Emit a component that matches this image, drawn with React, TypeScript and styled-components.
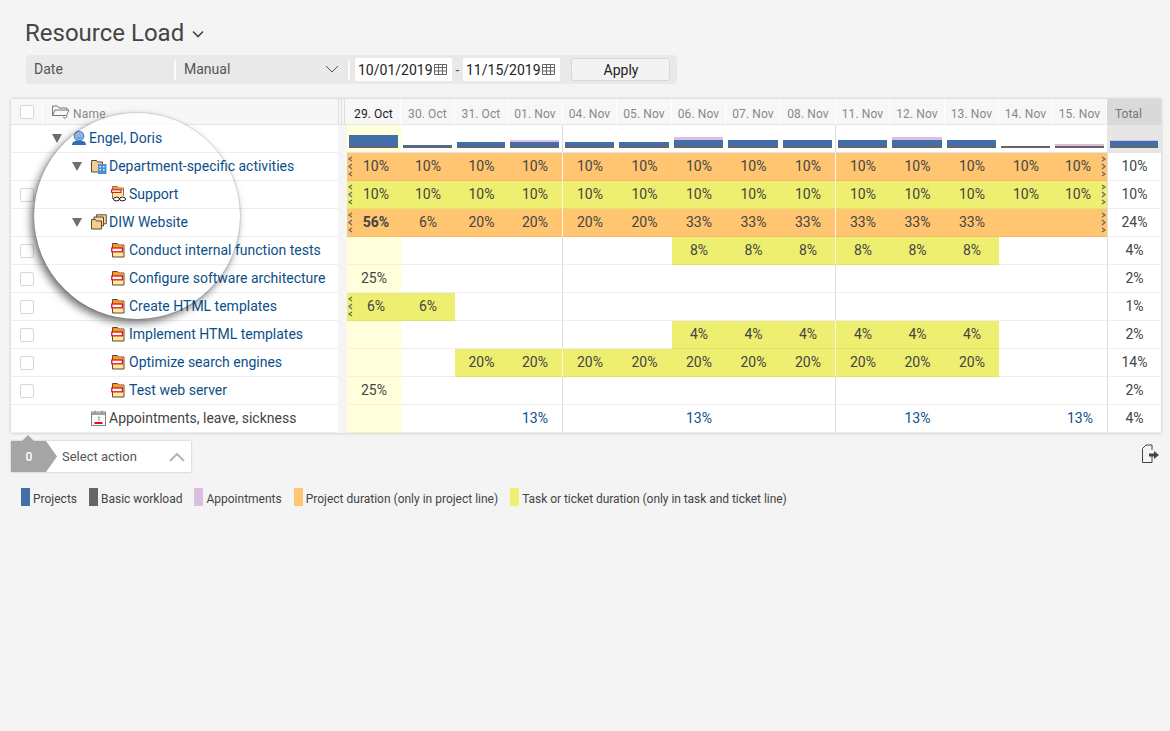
import React from "react";
import styled, { createGlobalStyle } from "styled-components";

const GlobalStyle = createGlobalStyle`
* {
  box-sizing: border-box;
  font-family: "Roboto", "Liberation Sans", sans-serif;
}
body {
  margin: 0;
  padding: 0;
  background-color: #f4f4f4;
}
`;

const Page = styled.div`
  width: 1170px;
  height: 731px;
  padding: 0 9px 0 11px;
  overflow: hidden;
`;

const TitleRow = styled.div`
  height: 55px;
  padding: 19px 0 0 14px;
  display: flex;
  align-items: flex-start;
  gap: 8px;
`;

const Title = styled.h1`
  margin: 0;
  font-size: 24px;
  line-height: 28px;
  font-weight: 400;
  color: #444;
`;

const TitleCaret = styled.svg`
  width: 12px;
  height: 8px;
  margin-top: 11px;
`;

const Toolbar = styled.div`
  margin-left: 15px;
  width: 651px;
  height: 29px;
  background: #e9e9e9;
  border-radius: 4px;
  display: flex;
  align-items: center;
  color: #555;
  font-size: 14px;
`;

const ToolField = styled.div<{ $width: number }>`
  width: ${({ $width }) => $width}px;
  height: 100%;
  padding: 0 9px 1px 8px;
  display: flex;
  align-items: center;
  justify-content: space-between;
`;

const ToolDivider = styled.div`
  width: 2px;
  height: 20px;
  background: #fbfbfb;
`;

const DateGroup = styled.div`
  margin-left: 5px;
  display: flex;
  align-items: center;
`;

const DateBox = styled.div`
  width: 97px;
  height: 23px;
  background: #fff;
  color: #222;
  padding: 0 5px 0 3px;
  display: flex;
  align-items: center;
  justify-content: space-between;
`;

const DateDash = styled.span`
  width: 11px;
  text-align: center;
  color: #555;
`;

const ApplyButton = styled.div`
  width: 99px;
  height: 23px;
  margin-left: 11px;
  padding-left: 1px;
  background: #f3f3f3;
  border: 1px solid #d9d9d9;
  border-radius: 3px;
  color: #222;
  display: flex;
  align-items: center;
  justify-content: center;
`;

const Table = styled.div`
  position: relative;
  margin-top: 15px;
  width: 1150px;
  background: #fff;
  box-shadow: 0 0 3px rgba(0, 0, 0, 0.22);
`;

const Lens = styled.div`
  position: absolute;
  left: 23px;
  top: 14px;
  width: 206px;
  height: 206px;
  border-radius: 50%;
  pointer-events: none;
  background: linear-gradient(rgba(255, 255, 255, 0.75) 12px, transparent 12px);
  box-shadow: -3px 4px 9px rgba(0, 0, 0, 0.55), 0 0 2px rgba(0, 0, 0, 0.3);
`;

const Row = styled.div`
  display: flex;
  height: 28px;
`;

const HeadRow = styled(Row)`
  height: 26px;
`;

const HeadCheckCell = styled.div`
  width: 32px;
  background: #f7f7f7;
  border-right: 1px solid #fff;
  border-bottom: 1px solid #e4e4e4;
  padding-left: 9px;
  display: flex;
  align-items: center;
`;

const HeadName = styled.div`
  width: 295px;
  background: #f7f7f7;
  border-bottom: 1px solid #e4e4e4;
  padding-left: 9px;
  display: flex;
  align-items: center;
  gap: 3px;
  font-size: 12px;
  color: #888;
  letter-spacing: 0.2px;
`;

const HeadLabel = styled.span`
  padding-top: 4px;
`;

const HeadGrip = styled.div`
  width: 9px;
  border-bottom: 1px solid #e4e4e4;
  background: repeating-linear-gradient(90deg, #dedede 0 1px, #f6f6f6 1px 3px);
`;

const Days = styled.div`
  width: 760px;
  display: grid;
  grid-template-columns: 54px 54px 53px 55px 54px 55px 54px 55px 55px 54px 55px 54px 54px 54px;
`;

const DayHead = styled.div<{ $today?: boolean }>`
  background: #f7f7f7;
  border-right: 1px solid #fff;
  border-bottom: 1px solid #e4e4e4;
  padding-top: 4px;
  display: flex;
  align-items: center;
  justify-content: center;
  font-size: 12px;
  letter-spacing: 0.1px;
  color: ${({ $today }) => ($today ? "#222" : "#888")};
`;

const TotalHead = styled.div`
  width: 54px;
  background: #d9d9d9;
  padding: 4px 0 0 8px;
  display: flex;
  align-items: center;
  font-size: 12px;
  color: #777;
`;

const CheckBox = styled.span`
  display: block;
  width: 14px;
  height: 14px;
  background: #fff;
  border: 1px solid #d6d6d6;
  border-radius: 2px;
`;

const CheckCell = styled.div`
  width: 32px;
  padding-left: 9px;
  border-bottom: 1px solid #eee;
  display: flex;
  align-items: center;
`;

const NameCell = styled.div<{ $level: number }>`
  width: 295px;
  padding: 0 0 2px ${({ $level }) => 9 + $level * 20}px;
  border-bottom: 1px solid #eee;
  display: flex;
  align-items: center;
  font-size: 14px;
  white-space: nowrap;
`;

const Toggle = styled.span`
  width: 0;
  height: 0;
  margin: 2px 9px 0 0;
  border-left: 5.5px solid transparent;
  border-right: 5.5px solid transparent;
  border-top: 9px solid #6e6e6e;
`;

const TogglePlaceholder = styled.span`
  width: 19px;
`;

const NameIcon = styled.svg`
  width: 16px;
  height: 16px;
  margin-right: 2px;
  flex: none;
`;

const NameText = styled.span<{ $plain?: boolean }>`
  color: ${({ $plain }) => ($plain ? "#444" : "#0c4f88")};
`;

const Grip = styled.div`
  width: 9px;
  background: #f5f5f5;
`;

type CellKind = "blank" | "today" | "project" | "task";

const cellColors: Record<CellKind, [string, string]> = {
  blank: ["#fff", "#eee"],
  today: ["#ffffdc", "#f3f3d2"],
  project: ["#ffc570", "#f3ba68"],
  task: ["#eeee70", "#e2e26a"],
};

const Cell = styled.div<{ $kind: CellKind; $week?: boolean; $pad?: "left" | "right"; $bold?: boolean; $link?: boolean }>`
  position: relative;
  background: ${({ $kind }) => cellColors[$kind][0]};
  border-bottom: 1px solid ${({ $kind }) => cellColors[$kind][1]};
  border-right: ${({ $week, $kind }) =>
    $week ? `1px solid ${$kind === "blank" ? "#dedede" : "#f7f7f7"}` : "0"};
  padding: ${({ $pad }) =>
    $pad === "left" ? "0 0 2px 4px" : $pad === "right" ? "0 4px 2px 0" : "0 0 2px"};
  display: flex;
  align-items: center;
  justify-content: center;
  font-size: 14px;
  font-weight: ${({ $bold }) => ($bold ? 700 : 400)};
  color: ${({ $link }) => ($link ? "#0c4f88" : "#444")};
`;

const EdgeMarks = styled.svg<{ $side: "left" | "right" }>`
  position: absolute;
  top: 3px;
  ${({ $side }) => ($side === "left" ? "left: 1px;" : "right: 1px;")}
  width: 5px;
  height: 21px;
`;

const BarCell = styled.div<{ $today?: boolean; $week?: boolean }>`
  background: ${({ $today }) => ($today ? "#ffffdc" : "#fff")};
  border-bottom: 1px solid #e4e4e4;
  border-right: ${({ $week }) => ($week ? "1px solid #dedede" : "0")};
  padding: 0 3px 4px 2px;
  display: flex;
  flex-direction: column;
  justify-content: flex-end;
`;

const BarPart = styled.div<{ $color: string; $height: number }>`
  height: ${({ $height }) => $height}px;
  background: ${({ $color }) => $color};
`;

const TotalCell = styled.div`
  width: 54px;
  padding-bottom: 2px;
  border-left: 1px solid #dedede;
  border-bottom: 1px solid #eee;
  display: flex;
  align-items: center;
  justify-content: center;
  font-size: 14px;
  color: #444;
`;

const TotalBars = styled.div`
  width: 54px;
  background: #e6e6e6;
  border-bottom: 1px solid #e4e4e4;
  padding: 0 3px 4px 3px;
  display: flex;
  flex-direction: column;
  justify-content: flex-end;
`;

const ActionsRow = styled.div`
  position: relative;
  margin-top: 8px;
  height: 31px;
  display: flex;
  justify-content: space-between;
  align-items: center;
`;

const ActionBox = styled.div`
  position: relative;
  width: 180px;
  height: 31px;
  background: #fff;
  box-shadow: 0 0 2px rgba(0, 0, 0, 0.25);
  display: flex;
  align-items: center;
  padding: 0 6px 0 51px;
  justify-content: space-between;
  font-size: 13px;
  color: #555;
`;

const CountTag = styled.div`
  position: absolute;
  left: 0;
  top: 0;
  width: 46px;
  height: 31px;
  padding-right: 10px;
  background: #a5a5a5;
  clip-path: polygon(0 0, 35px 0, 46px 50%, 35px 100%, 0 100%);
  display: flex;
  align-items: center;
  justify-content: center;
  color: #fff;
  font-size: 12px;
  font-weight: 500;
`;

const TagPointer = styled.div`
  position: absolute;
  left: 11px;
  top: -6px;
  width: 0;
  height: 0;
  border-left: 6px solid transparent;
  border-right: 6px solid transparent;
  border-bottom: 6px solid #a5a5a5;
`;

const ExportIcon = styled.svg`
  width: 20px;
  height: 20px;
  margin: 0 1px 6px 0;
`;

const Legend = styled.div`
  margin: 16px 0 0 10px;
  display: flex;
  gap: 12px;
`;

const LegendItem = styled.div`
  display: flex;
  gap: 3px;
  height: 18px;
  font-size: 12px;
  line-height: 23px;
  color: #444;

  &:last-child {
    letter-spacing: -0.05px;
  }
`;

const Swatch = styled.span<{ $color: string }>`
  width: 9px;
  height: 18px;
  background: ${({ $color }) => $color};
`;

const CalendarGlyph = () => (
  <svg width="13" height="11" viewBox="0 0 13 11" fill="none">
    <path d="M.5.5h12v10H.5zM.5 3.500h12M.5 7h12M4.500.5v10M8.500.5v10" stroke="#666" />
  </svg>
);

const PersonIcon = () => (
  <NameIcon viewBox="0 0 16 16">
    <path d="M1 15c0-3.500 3-4.600 7-4.600s7 1.100 7 4.600z" fill="#2f6db5" />
    <circle cx="8" cy="6" r="4.800" fill="#8db8e6" stroke="#3f78b8" />
    <path d="M6 7.500c1 .9 3 .9 4 0" stroke="#3f78b8" fill="none" strokeWidth=".7" />
  </NameIcon>
);

const DeptIcon = () => (
  <NameIcon viewBox="0 0 16 16">
    <path d="M.5 14V2.500h5l1 1.500h5v10z" fill="#f0cf95" stroke="#5d4a33" />
    <rect x="7" y="6" width="8.500" height="10" fill="#4d8fd6" />
    <path d="M8.500 8h1.500v1.500H8.500zM12 8h1.500v1.500H12zM8.500 11H10v1.500H8.500zM12 11h1.500v1.500H12z" fill="#dbeafa" />
  </NameIcon>
);

const StackIcon = () => (
  <NameIcon viewBox="0 0 16 16">
    <path d="M5.500 5V.8h9.800v9H12" fill="#f4d8a5" stroke="#5d4a33" />
    <path d="M3 7.500V3h9.500v9H10" fill="#f4d8a5" stroke="#5d4a33" />
    <path d="M.5 15V5.500h4l1 1.500h5v8z" fill="#f4cc8e" stroke="#5d4a33" />
  </NameIcon>
);

const TaskIcon = () => (
  <NameIcon viewBox="0 0 16 16">
    <path d="M1.500 15V1.500h5l1 1.500h5.500v12z" fill="#ffe79a" stroke="#5d4a33" />
    <path d="M2 6V2h4.300l1 1.500H12.500V6z" fill="#f59a23" />
    <rect x=".8" y="6" width="10.600" height="3.800" fill="#fff" stroke="#e3101a" strokeWidth="1.300" />
  </NameIcon>
);

const SupportIcon = () => (
  <NameIcon viewBox="0 0 16 16">
    <path d="M1.500 13V.5h5l1 1.500h5v8" fill="#ffe79a" stroke="#8a7550" />
    <path d="M2 4V1h4.300l1 1.500H12V4z" fill="#f59a23" />
    <rect x=".6" y="3.800" width="9.400" height="2.600" fill="#fff" stroke="#e3101a" strokeWidth="1.100" />
    <ellipse cx="5.500" cy="13" rx="3" ry="1.900" fill="#fff" stroke="#111" />
    <ellipse cx="11.500" cy="13" rx="3" ry="1.900" fill="#fff" stroke="#111" />
  </NameIcon>
);

const AppointmentIcon = () => (
  <NameIcon viewBox="0 0 16 16">
    <rect x=".5" y="2" width="14" height="13.500" fill="#fafafa" stroke="#7d8794" />
    <rect x="1" y="2.500" width="13" height="2.500" fill="#9aa3ad" />
    <path d="M4 .5v3M11 .5v3" stroke="#7d8794" />
    <path d="M7 7.500l1-.7v4" stroke="#888" fill="none" />
    <rect x="3.500" y="12" width="8" height="2" fill="#e3101a" />
  </NameIcon>
);

const LeftMarks = () => (
  <EdgeMarks $side="left" viewBox="0 0 5 21" fill="none" stroke="#666" strokeWidth="1.200">
    <path d="M4 1L1 3l3 2M4 8L1 10.500l3 2.500M4 16l-3 2 3 2" />
  </EdgeMarks>
);

const RightMarks = () => (
  <EdgeMarks $side="right" viewBox="0 0 5 21" fill="none" stroke="#666" strokeWidth="1.200">
    <path d="M1 1l3 2-3 2M1 8l3 2.500L1 13M1 16l3 2-3 2" />
  </EdgeMarks>
);

const days = [
  "29. Oct", "30. Oct", "31. Oct", "01. Nov", "04. Nov", "05. Nov", "06. Nov",
  "07. Nov", "08. Nov", "11. Nov", "12. Nov", "13. Nov", "14. Nov", "15. Nov",
];

const isWeekEnd = (i: number) => i === 3 || i === 8;

const load = [
  [11, 0], [1, 0], [4, 0], [4, 2], [4, 0], [4, 0], [6, 3],
  [6, 0], [6, 0], [6, 0], [6, 3], [6, 0], [0, 0], [0, 2],
];

type RowData = {
  name: string;
  level: number;
  icon: React.FC;
  check?: boolean;
  toggle?: boolean;
  plain?: boolean;
  total: string;
  values: Record<number, string>;
  fill?: "project" | "task";
  filled: number[];
  marks?: "left" | "both";
  link?: boolean;
};

const range = (from: number, to: number) => {
  const out: number[] = [];
  for (let i = from; i <= to; i++) out.push(i);
  return out;
};

const same = (idx: number[], v: string) => {
  const out: Record<number, string> = {};
  idx.forEach((i) => (out[i] = v));
  return out;
};

const rows: RowData[] = [
  { name: "Department-specific activities", level: 1, icon: DeptIcon, toggle: true, total: "10%", values: same(range(0, 13), "10%"), fill: "project", filled: range(0, 13), marks: "both" },
  { name: "Support", level: 2, icon: SupportIcon, check: true, total: "10%", values: same(range(0, 13), "10%"), fill: "task", filled: range(0, 13), marks: "both" },
  {
    name: "DIW Website", level: 1, icon: StackIcon, toggle: true, total: "24%",
    values: { 0: "56%", 1: "6%", 2: "20%", 3: "20%", 4: "20%", 5: "20%", ...same(range(6, 11), "33%") },
    fill: "project", filled: range(0, 13), marks: "both",
  },
  { name: "Conduct internal function tests", level: 2, icon: TaskIcon, check: true, total: "4%", values: same(range(6, 11), "8%"), fill: "task", filled: range(6, 11) },
  { name: "Configure software architecture", level: 2, icon: TaskIcon, check: true, total: "2%", values: { 0: "25%" }, filled: [] },
  { name: "Create HTML templates", level: 2, icon: TaskIcon, check: true, total: "1%", values: { 0: "6%", 1: "6%" }, fill: "task", filled: [0, 1], marks: "left" },
  { name: "Implement HTML templates", level: 2, icon: TaskIcon, check: true, total: "2%", values: same(range(6, 11), "4%"), fill: "task", filled: range(6, 11) },
  { name: "Optimize search engines", level: 2, icon: TaskIcon, check: true, total: "14%", values: same(range(2, 11), "20%"), fill: "task", filled: range(2, 11) },
  { name: "Test web server", level: 2, icon: TaskIcon, check: true, total: "2%", values: { 0: "25%" }, filled: [] },
  { name: "Appointments, leave, sickness", level: 1, icon: AppointmentIcon, plain: true, total: "4%", values: same([3, 6, 10, 13], "13%"), filled: [], link: true },
];

const legend = [
  ["#426fa9", "Projects"],
  ["#666", "Basic workload"],
  ["#dcbfdf", "Appointments"],
  ["#ffc570", "Project duration (only in project line)"],
  ["#eeee70", "Task or ticket duration (only in task and ticket line)"],
];

const TableRow = ({ row }: { row: RowData }) => {
  const Icon = row.icon;
  return (
    <Row>
      <CheckCell>{row.check && <CheckBox />}</CheckCell>
      <NameCell $level={row.level}>
        {row.toggle ? <Toggle /> : <TogglePlaceholder />}
        <Icon />
        <NameText $plain={row.plain}>{row.name}</NameText>
      </NameCell>
      <Grip />
      <Days>
        {days.map((d, i) => {
          const filled = row.filled.includes(i);
          const kind: CellKind = filled && row.fill ? row.fill : i === 0 ? "today" : "blank";
          const first = i === 0 && !!row.marks;
          const last = i === 13 && row.marks === "both";
          return (
            <Cell
              key={d}
              $kind={kind}
              $week={isWeekEnd(i)}
              $pad={first ? "left" : last ? "right" : undefined}
              $bold={row.values[i] === "56%"}
              $link={row.link}
            >
              {first && <LeftMarks />}
              {row.values[i]}
              {last && <RightMarks />}
            </Cell>
          );
        })}
      </Days>
      <TotalCell>{row.total}</TotalCell>
    </Row>
  );
};

export default function App() {
  return (
    <Page>
      <GlobalStyle />
      <TitleRow>
        <Title>Resource Load</Title>
        <TitleCaret viewBox="0 0 12 8" fill="none" stroke="#444" strokeWidth="1.600">
          <path d="M1 1.500l5 5 5-5" />
        </TitleCaret>
      </TitleRow>
      <Toolbar>
        <ToolField $width={148}>Date</ToolField>
        <ToolDivider />
        <ToolField $width={172}>
          Manual
          <svg width="14" height="8" viewBox="0 0 14 8" fill="none" stroke="#555">
            <path d="M1 1l6 6 6-6" />
          </svg>
        </ToolField>
        <ToolDivider />
        <DateGroup>
          <DateBox>
            10/01/2019
            <CalendarGlyph />
          </DateBox>
          <DateDash>-</DateDash>
          <DateBox>
            11/15/2019
            <CalendarGlyph />
          </DateBox>
          <ApplyButton>Apply</ApplyButton>
        </DateGroup>
      </Toolbar>
      <Table>
        <HeadRow>
          <HeadCheckCell>
            <CheckBox />
          </HeadCheckCell>
          <HeadName>
            <svg width="18" height="14" viewBox="0 0 18 14" fill="none" stroke="#777">
              <path d="M.5 10.500V1h5l1.500 2h8v2M.5 10.500L3 5h14l-2.500 5.500zM11 12l2 1.500 2.500-2.500" />
            </svg>
            <HeadLabel>Name</HeadLabel>
          </HeadName>
          <HeadGrip />
          <Days>
            {days.map((d, i) => (
              <DayHead key={d} $today={i === 0}>
                {d}
              </DayHead>
            ))}
          </Days>
          <TotalHead>Total</TotalHead>
        </HeadRow>
        <Row>
          <CheckCell />
          <NameCell $level={0}>
            <Toggle />
            <PersonIcon />
            <NameText>Engel, Doris</NameText>
          </NameCell>
          <Grip />
          <Days>
            {days.map((d, i) => (
              <BarCell key={d} $today={i === 0} $week={isWeekEnd(i)}>
                <BarPart $color="#dcbfdf" $height={load[i][1]} />
                <BarPart $color="#426fa9" $height={load[i][0]} />
                <BarPart $color="#666" $height={2} />
              </BarCell>
            ))}
          </Days>
          <TotalBars>
            <BarPart $color="#dcbfdf" $height={1} />
            <BarPart $color="#426fa9" $height={5} />
            <BarPart $color="#666" $height={2} />
          </TotalBars>
        </Row>
        {rows.map((r) => (
          <TableRow key={r.name} row={r} />
        ))}
        <Lens />
      </Table>
      <ActionsRow>
        <ActionBox>
          <TagPointer />
          <CountTag>0</CountTag>
          Select action
          <svg width="16" height="10" viewBox="0 0 16 10" fill="none" stroke="#b5b5b5" strokeWidth="2">
            <path d="M1 9l7-7 7 7" />
          </svg>
        </ActionBox>
        <ExportIcon viewBox="0 0 20 20" fill="none">
          <path d="M12 12v6.500H2.500V4.500L6 1h6v5" stroke="#444" />
          <path d="M9 9.500h5V7l5 4-5 4v-2.500H9z" fill="#444" />
        </ExportIcon>
      </ActionsRow>
      <Legend>
        {legend.map(([color, label]) => (
          <LegendItem key={label}>
            <Swatch $color={color} />
            {label}
          </LegendItem>
        ))}
      </Legend>
    </Page>
  );
}
